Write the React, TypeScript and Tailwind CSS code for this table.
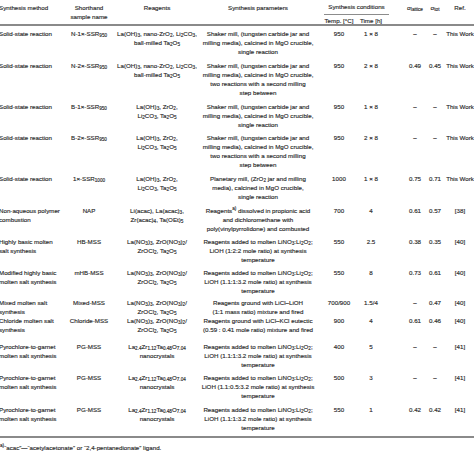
import React from 'react';

type Cell = React.ReactNode[];

interface RowData {
  method: Cell;
  name: Cell;
  reagents: Cell;
  params: Cell;
  temp: string;
  time: string;
  latt: string;
  tot: string;
  refText: string;
  pad: string;
}

const S = ({ children }: { children: React.ReactNode }) => <sub>{children}</sub>;

const cols = 'grid grid-cols-[68px_44px_92px_120px_32px_49px_22px_18px_32px]';

const ssrA: Cell = [
  <>La(OH)<S>3</S>, nano-ZrO<S>2</S>, Li<S>2</S>CO<S>3</S>,</>,
  <>ball-milled Ta<S>2</S>O<S>5</S></>,
];
const ssrB: Cell = [
  <>La(OH)<S>3</S>, ZrO<S>2</S>,</>,
  <>Li<S>2</S>CO<S>3</S>, Ta<S>2</S>O<S>5</S></>,
];
const nitrates: Cell = [
  <>La(NO<S>3</S>)<S>3</S>, ZrO(NO<S>3</S>)<S>2</S>/</>,
  <>ZrOCl<S>2</S>, Ta<S>2</S>O<S>5</S></>,
];
const pyro: Cell = [
  <>La<S>2.4</S>Zr<S>1.12</S>Ta<S>0.48</S>O<S>7.04</S></>,
  <>nanocrystals</>,
];
const shaker = (last: Cell): Cell => [
  <>Shaker mill, (tungsten carbide jar and</>,
  <>milling media), calcined in MgO crucible,</>,
  ...last,
];
const single: Cell = [<>single reaction</>];
const two: Cell = [<>two reactions with a second milling</>, <>step between</>];
const molten = (ratio: string): Cell => [
  <>Reagents added to molten LiNO<S>3</S>:Li<S>2</S>O<S>2</S>;</>,
  <>LiOH ({ratio} mole ratio) at synthesis</>,
  <>temperature</>,
];
const ssr = (n: string, t: string): Cell => [<>{n}×-SSR<S>{t}</S></>];
const solid: Cell = [<>Solid-state reaction</>];
const pgMethod: Cell = [<>Pyrochlore-to-garnet</>, <>molten salt synthesis</>];

const rows: RowData[] = [
  { method: solid, name: ssr('N-1', '950'), reagents: ssrA, params: shaker(single), temp: '950', time: '1 × 8', latt: '–', tot: '–', refText: 'This Work', pad: 'pt-[2.5px]' },
  { method: solid, name: ssr('N-2', '950'), reagents: ssrA, params: shaker(two), temp: '950', time: '2 × 8', latt: '0.49', tot: '0.45', refText: 'This Work', pad: 'pt-[5px]' },
  { method: solid, name: ssr('B-1', '950'), reagents: ssrB, params: shaker(single), temp: '950', time: '1 × 8', latt: '–', tot: '–', refText: 'This Work', pad: 'pt-[5px]' },
  { method: solid, name: ssr('B-2', '950'), reagents: ssrB, params: shaker(two), temp: '950', time: '2 × 8', latt: '–', tot: '–', refText: 'This Work', pad: 'pt-[4px]' },
  {
    method: solid,
    name: ssr('1', '1000'),
    reagents: ssrB,
    params: [
      <>Planetary mill, (ZrO<S>2</S> jar and milling</>,
      <>media), calcined in MgO crucible,</>,
      <>single reaction</>,
    ],
    temp: '1000', time: '1 × 8', latt: '0.75', tot: '0.71', refText: 'This Work', pad: 'pt-[5px]',
  },
  {
    method: [<>Non-aqueous polymer</>, <>combustion</>],
    name: [<>NAP</>],
    reagents: [
      <>Li(acac), La(acac)<S>3</S>,</>,
      <>Zr(acac)<S>4</S>, Ta(OEt)<S>5</S></>,
    ],
    params: [
      <>Reagents<sup>a)</sup> dissolved in propionic acid</>,
      <>and dichloromethane with</>,
      <>poly(vinylpyrrolidone) and combusted</>,
    ],
    temp: '700', time: '4', latt: '0.61', tot: '0.57', refText: '[38]', pad: 'pt-[5px]',
  },
  { method: [<>Highly basic molten</>, <>salt synthesis</>], name: [<>HB-MSS</>], reagents: nitrates, params: molten('1:2:2'), temp: '550', time: '2.5', latt: '0.38', tot: '0.35', refText: '[40]', pad: 'pt-[4px]' },
  { method: [<>Modified highly basic</>, <>molten salt synthesis</>], name: [<>mHB-MSS</>], reagents: nitrates, params: molten('1.1:1:3.2'), temp: '550', time: '8', latt: '0.73', tot: '0.61', refText: '[40]', pad: 'pt-[4px]' },
  {
    method: [<>Mixed molten salt</>, <>synthesis</>],
    name: [<>Mixed-MSS</>],
    reagents: nitrates,
    params: [<>Reagents ground with LiCl–LiOH</>, <>(1:1 mass ratio) mixture and fired</>],
    temp: '700/900', time: '1.5/4', latt: '–', tot: '0.47', refText: '[40]', pad: 'pt-[3px]',
  },
  {
    method: [<>Chloride molten salt</>, <>synthesis</>],
    name: [<>Chloride-MSS</>],
    reagents: nitrates,
    params: [<>Reagents ground with LiCl–KCl eutectic</>, <>(0.59 : 0.41 mole ratio) mixture and fired</>],
    temp: '900', time: '4', latt: '0.61', tot: '0.46', refText: '[40]', pad: 'pt-0',
  },
  { method: pgMethod, name: [<>PG-MSS</>], reagents: pyro, params: molten('1.1:1:3.2'), temp: '400', time: '5', latt: '–', tot: '–', refText: '[41]', pad: 'pt-[8px]' },
  { method: pgMethod, name: [<>PG-MSS</>], reagents: pyro, params: molten('1.1:0.5:3.2'), temp: '500', time: '3', latt: '–', tot: '–', refText: '[41]', pad: 'pt-[4px]' },
  { method: pgMethod, name: [<>PG-MSS</>], reagents: pyro, params: molten('1.1:1:3.2'), temp: '550', time: '1', latt: '0.42', tot: '0.42', refText: '[41]', pad: 'pt-[5px]' },
];

// centred column; wide lines spill out evenly on both sides
const Lines = ({ lines, className = '' }: { lines: Cell; className?: string }) => (
  <div className={`flex flex-col items-center ${className}`}>
    {lines.map((l, i) => (
      <span key={i} className="whitespace-nowrap">{l}</span>
    ))}
  </div>
);

const TableRow = ({ row }: { row: RowData }) => (
  <div className={`${cols} items-start ${row.pad}`}>
    <div className="flex flex-col">
      {row.method.map((l, i) => (
        <span key={i} className="whitespace-nowrap">{l}</span>
      ))}
    </div>
    <Lines lines={row.name} />
    <Lines lines={row.reagents} />
    <Lines lines={row.params} className="pr-[10px]" />
    <Lines lines={[row.temp]} />
    <Lines lines={[row.time]} className="pr-[17px]" />
    <Lines lines={[row.latt]} />
    <Lines lines={[row.tot]} />
    <Lines lines={[row.refText]} />
  </div>
);

export default function App() {
  return (
    <div className="w-[474px] h-[456px] overflow-hidden bg-white">
      <div className="w-[477px] ml-[-1px] font-['Liberation_Sans',Arial,sans-serif] text-[6.2px] leading-[9px] text-[#2b2b2b] [-webkit-text-stroke:0.15px_#2b2b2b]">
        {/* header */}
        <div className={`${cols} items-start h-[24px] pt-[2.5px]`}>
          <span className="whitespace-nowrap">Synthesis method</span>
          <Lines lines={[<>Shorthand</>, <>sample name</>]} />
          <Lines lines={[<>Reagents</>]} />
          <Lines lines={[<>Synthesis parameters</>]} className="pr-[10px]" />
          <div className="col-span-2 flex flex-col pr-[15px] mt-[-0.5px]">
            <div className="ml-[1px] flex justify-center border-b border-[#8c8c8c] pb-[2.5px]">
              <span className="whitespace-nowrap">Synthesis conditions</span>
            </div>
            <div className="grid grid-cols-[32px_32px] mt-[1px]">
              <Lines lines={[<>Temp. [°C]</>]} />
              <Lines lines={[<>Time [h]</>]} />
            </div>
          </div>
          <Lines lines={[<>σ<S>lattice</S></>]} />
          <Lines lines={[<>σ<S>tot</S></>]} />
          <Lines lines={[<>Ref.</>]} />
        </div>
        <div className="h-[2px] bg-[#8a8a8a]" />

        {rows.map((r, i) => (
          <TableRow key={i} row={r} />
        ))}

        <div className="mt-[4.5px] h-[2px] bg-[#8a8a8a]" />
        <div className="pt-[4.5px] pl-[1px] whitespace-nowrap">
          <sup>a)</sup>“acac”—“acetylacetonate” or “2,4-pentanedionate” ligand.
        </div>
      </div>
    </div>
  );
}
